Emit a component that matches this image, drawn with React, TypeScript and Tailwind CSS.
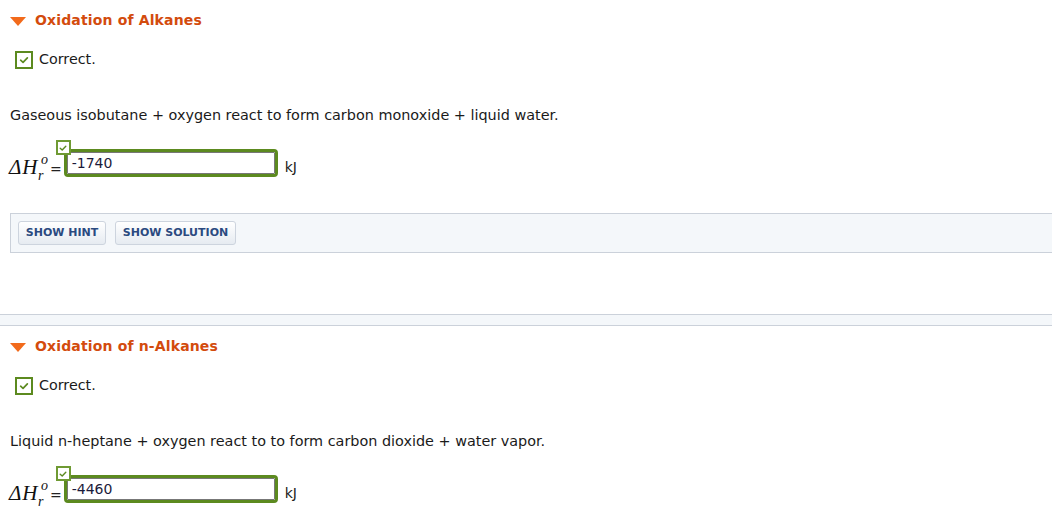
import React from "react";

function Check({ size }: { size: number }) {
  return (
    <svg width={size} height={size} viewBox="0 0 10 10" fill="none">
      <path d="M2.2 5.2 L4.2 7 L7.8 3.2" stroke="#5c8a1f" strokeWidth="1.4" strokeLinecap="round" strokeLinejoin="round" />
    </svg>
  );
}

function Section({ title, question, value }: { title: string; question: string; value: string }) {
  return (
    <div className="relative h-[187px] pt-[10px]">
      <div className="flex items-center h-[20px] pl-[10px]">
        <div className="w-0 h-0 border-l-[8px] border-r-[8px] border-t-[9px] border-l-transparent border-r-transparent border-t-[#f26a1b] mt-[2px]" />
        <span className="ml-[9px] text-[14px] font-bold text-[#d34b0d] tracking-[0.15px]">{title}</span>
      </div>
      <div className="flex items-center mt-[21px] pl-[15px] h-[18px]">
        <div className="w-[18px] h-[18px] border-2 border-[#5c8a1f] bg-white flex items-center justify-center">
          <Check size={12} />
        </div>
        <span className="ml-[6px] text-[14.3px] text-[#1a1a1a]">Correct.</span>
      </div>
      <div className="mt-[37px] pl-[10px] text-[14.4px] text-[#1a1a1a] h-[18px] leading-[18px]">{question}</div>
      <div className="flex items-end mt-[25px] pl-[10px] h-[28px]">
        <div className="relative font-['Liberation_Serif'] italic text-[#111] w-[40px] h-[32px] shrink-0">
          <span className="absolute left-[-1px] top-[12px] text-[21px] leading-[20px] tracking-[1px]">ΔH</span>
          <span className="absolute left-[31px] top-[8px] text-[14px] leading-[14px]">o</span>
          <span className="absolute left-[28px] top-[24px] text-[14px] leading-[14px]">r</span>
        </div>
        <span className="text-[14px] text-[#222] mb-[-3px]">=</span>
        <div className="relative ml-[2px] w-[214px] h-[28px] border-[3px] border-[#5c8a1f] rounded-[4px] bg-white shrink-0">
          <div className="absolute inset-0 border border-[#777] rounded-[1px] pl-[4px] pt-[1px] text-[14px] text-[#1a1a3a] leading-[18px]">{value}</div>
          <div className="absolute left-[-11px] top-[-12px] w-[15px] h-[15px] border-2 border-[#6f9a33] bg-white flex items-center justify-center">
            <Check size={10} />
          </div>
        </div>
        <span className="ml-[7px] text-[14px] text-[#222] mb-[-1px]">kJ</span>
      </div>
    </div>
  );
}

export default function App() {
  return (
    <div className="w-[1052px] h-[521px] bg-white overflow-hidden font-['DejaVu_Sans',sans-serif]">
      <Section
        title="Oxidation of Alkanes"
        question="Gaseous isobutane + oxygen react to form carbon monoxide + liquid water."
        value="-1740"
      />
      <div className="ml-[10px] w-[1060px] h-[40px] mt-[26px] bg-[#f4f7fa] border border-[#cbd1da] flex items-center pl-[7px] gap-[9px]">
        <button className="h-[24px] w-[88px] rounded-[3px] border border-[#cdd4de] bg-gradient-to-b from-white to-[#e6ebf1] text-[11px] font-bold text-[#2b4a80]">SHOW HINT</button>
        <button className="h-[24px] w-[121px] rounded-[3px] border border-[#cdd4de] bg-gradient-to-b from-white to-[#e6ebf1] text-[11px] font-bold text-[#2b4a80]">SHOW SOLUTION</button>
      </div>
      <div className="mt-[61px] h-[12px] bg-[#f4f7fa] border-t border-b border-[#cbd1da]" />
      <Section
        title="Oxidation of n-Alkanes"
        question="Liquid n-heptane + oxygen react to to form carbon dioxide + water vapor."
        value="-4460"
      />
    </div>
  );
}
